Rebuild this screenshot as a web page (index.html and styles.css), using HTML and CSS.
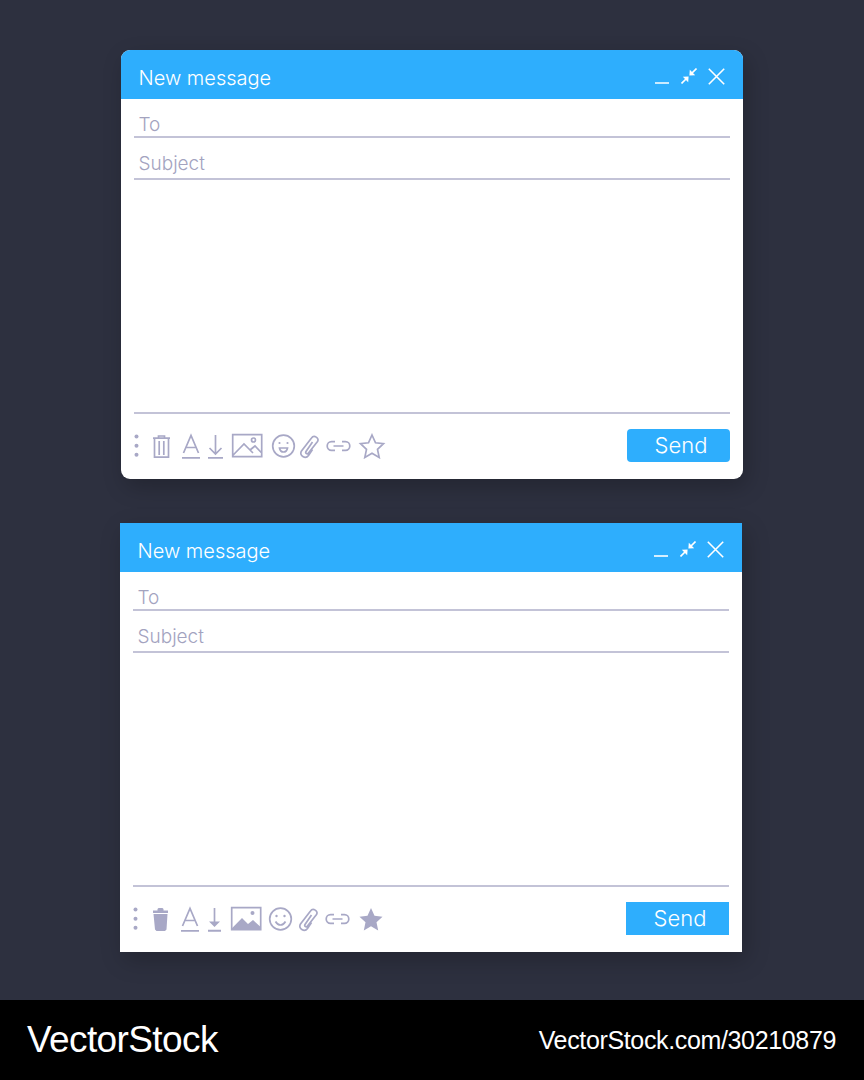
FILE: index.html
```html
<!DOCTYPE html>
<html lang="en">
<head>
  <meta charset="UTF-8">
  <title>New message</title>
  <link rel="stylesheet" href="styles.css">
</head>
<body>
  <main class="stage">
    <!-- Outline version, rounded corners -->
    <section class="window window-round">
      <header class="window-head">
        <span class="window-title">New message</span>
        <div class="window-controls">
          <svg class="ctl ctl-min" width="15" height="16" viewBox="0 0 15 16"><path d="M0 15h14"/></svg>
          <svg class="ctl ctl-shrink" width="16" height="16" viewBox="0 0 16 16"><path d="M15.500 .5 10 6M.5 15.500 6 10"/><path class="ctl-fill" d="M8.400 7.600 8.800 1.800l5.400 5.400zM7.600 8.400 7.200 14.200 1.800 8.800z"/></svg>
          <svg class="ctl ctl-close" width="17" height="17" viewBox="0 0 17 17"><path d="M.8 .8l15.400 15.400M16.200 .8 .8 16.200"/></svg>
        </div>
      </header>
      <div class="window-body">
        <div class="field field-to">To</div>
        <div class="field field-subject">Subject</div>
        <div class="message-area"></div>
        <div class="toolbar">
          <svg class="ico" width="14" height="26" viewBox="0 0 14 26"><circle class="solid" cx="2.500" cy="3.500" r="2"/><circle class="solid" cx="2.500" cy="12.700" r="2"/><circle class="solid" cx="2.500" cy="21.700" r="2"/></svg>
          <svg class="ico" width="28" height="26" viewBox="0 0 28 26"><path d="M5 5.200h17M10.500 4.500V3h6v1.500M6.500 5.200v19h14v-19M11.200 8v14M15.800 8v14"/></svg>
          <svg class="ico" width="28" height="26" viewBox="0 0 28 26"><path d="M7.500 20 15 2.500 22.500 20M10 14.500h10M6 24.800h18"/></svg>
          <svg class="ico" width="24" height="26" viewBox="0 0 24 26"><path d="M11.500 2v19M5.500 15l6 6 6-6M4 24.800h15"/></svg>
          <svg class="ico" width="39" height="26" viewBox="0 0 39 26"><path d="M4.700 1.700h29v22h-29zM4.700 22.500 16 11l9 9M22 17l5-4 6.700 7"/><circle cx="25.500" cy="7" r="2"/></svg>
          <svg class="ico" width="32" height="26" viewBox="0 0 32 26"><circle cx="16.500" cy="13" r="10.800"/><circle class="solid" cx="12.500" cy="10" r="1.100"/><circle class="solid" cx="20.500" cy="10" r="1.100"/><path d="M12.500 15h8c-.5 2.800-2 4-4 4s-3.500-1.200-4-4z"/></svg>
          <svg class="ico" width="23" height="26" viewBox="0 0 23 26"><path d="M13.500 9 7 18.500c-1 1.800 1.200 3.200 2.500 1.500L18.500 8.500c2.200-3.500-3.500-7-6-3.500L2.500 18c-2.800 4.500 4 8.500 7 4.500l4-6"/></svg>
          <svg class="ico" width="33" height="26" viewBox="0 0 33 26"><path d="M13 8.700H9.500a4.300 4.300 0 0 0 0 8.600H13M20 8.700h3.500a4.300 4.300 0 0 1 0 8.600H20M11.500 13h10"/></svg>
          <svg class="ico" width="34" height="26" viewBox="0 0 34 26"><path d="m17 2 3.500 7.800 8 .9-6 5.600 1.700 8.200-7.200-4.200-7.200 4.200 1.700-8.200-6-5.600 8-.9z"/></svg>
          <button class="send" type="button">Send</button>
        </div>
      </div>
    </section>

    <!-- Filled version, square corners -->
    <section class="window window-square">
      <header class="window-head">
        <span class="window-title">New message</span>
        <div class="window-controls">
          <svg class="ctl ctl-min" width="15" height="16" viewBox="0 0 15 16"><path d="M0 15h14"/></svg>
          <svg class="ctl ctl-shrink" width="16" height="16" viewBox="0 0 16 16"><path d="M15.500 .5 10 6M.5 15.500 6 10"/><path class="ctl-fill" d="M8.400 7.600 8.800 1.800l5.400 5.400zM7.600 8.400 7.200 14.200 1.800 8.800z"/></svg>
          <svg class="ctl ctl-close" width="17" height="17" viewBox="0 0 17 17"><path d="M.8 .8l15.400 15.400M16.200 .8 .8 16.200"/></svg>
        </div>
      </header>
      <div class="window-body">
        <div class="field field-to">To</div>
        <div class="field field-subject">Subject</div>
        <div class="message-area"></div>
        <div class="toolbar">
          <svg class="ico" width="14" height="26" viewBox="0 0 14 26"><circle class="solid" cx="2.500" cy="3.500" r="2"/><circle class="solid" cx="2.500" cy="12.700" r="2"/><circle class="solid" cx="2.500" cy="21.700" r="2"/></svg>
          <svg class="ico" width="28" height="26" viewBox="0 0 28 26"><path class="solid" d="M6 4.500h4.500V3l1-1h4l1 1v1.500H21V7H6zM6.500 8h14l-1 15.500-1.500 1.500H9.500L8 23.500z"/></svg>
          <svg class="ico" width="28" height="26" viewBox="0 0 28 26"><path d="M7.500 20 15 2.500 22.500 20M10 14.500h10M6 24.800h18"/></svg>
          <svg class="ico" width="24" height="26" viewBox="0 0 24 26"><path d="M11.500 2v16"/><path class="solid" d="M6 15.500h11L11.500 21zM5 23.700h13v2H5z"/></svg>
          <svg class="ico" width="39" height="26" viewBox="0 0 39 26"><path d="M4.700 1.700h29v22h-29z"/><path class="solid" d="M4.700 22.500 15 12l6 6 5-4 7.700 7v3h-29z"/><circle class="solid" cx="25.500" cy="7" r="2"/></svg>
          <svg class="ico" width="32" height="26" viewBox="0 0 32 26"><circle cx="14.500" cy="13" r="10.800"/><circle class="solid" cx="10.500" cy="10" r="1.200"/><circle class="solid" cx="18.500" cy="10" r="1.200"/><path d="M9.500 15.500c1.500 2.500 3 3.500 5 3.500s3.500-1 5-3.500"/></svg>
          <svg class="ico" width="23" height="26" viewBox="0 0 23 26"><path d="M13.500 9 7 18.500c-1 1.800 1.200 3.200 2.500 1.500L18.500 8.500c2.200-3.500-3.500-7-6-3.500L2.500 18c-2.800 4.500 4 8.500 7 4.500l4-6"/></svg>
          <svg class="ico" width="33" height="26" viewBox="0 0 33 26"><path d="M13 8.700H9.500a4.300 4.300 0 0 0 0 8.600H13M20 8.700h3.500a4.300 4.300 0 0 1 0 8.600H20M11.500 13h10"/></svg>
          <svg class="ico" width="34" height="26" viewBox="0 0 34 26"><path class="solid" d="m17 2 3.500 7.800 8 .9-6 5.600 1.700 8.200-7.200-4.200-7.200 4.200 1.700-8.200-6-5.600 8-.9z"/></svg>
          <button class="send" type="button">Send</button>
        </div>
      </div>
    </section>
  </main>

  <footer class="stock-bar">
    <span class="stock-logo">VectorStock</span>
    <span class="stock-id">VectorStock.com/30210879</span>
  </footer>
</body>
</html>
```

FILE: styles.css
```css
* {
  box-sizing: border-box;
}
html, body {
  margin: 0;
  padding: 0;
}
body {
  width: 864px;
  height: 1080px;
  overflow: hidden;
  background: #2d303f;
  font-family: 'Inter', 'Liberation Sans', sans-serif;
  font-weight: 300;
}
.stage {
  height: 1000px;
  padding-top: 50px;
}
.window {
  display: flex;
  flex-direction: column;
  width: 622px;
  height: 429px;
  background: #fff;
  box-shadow: 4px 8px 22px rgba(0, 0, 0, 0.22);
  overflow: hidden;
}
.window-round {
  margin-left: 121px;
  border-radius: 9px;
}
.window-square {
  margin-left: 120px;
  margin-top: 44px;
}
.window-head {
  display: flex;
  align-items: center;
  flex: none;
  height: 49px;
  padding: 0 18px 0 17.5px;
  background: #2eaefd;
  color: #fff;
}
.window-title {
  font-size: 20px;
  line-height: 24px;
  margin-top: 7px;
}
.window-controls {
  display: flex;
  align-items: flex-start;
  margin-left: auto;
  height: 17px;
  margin-top: 3px;
}
.ctl {
  display: block;
  fill: none;
  stroke: #fff;
  stroke-width: 1.6;
}
.ctl-fill {
  fill: #fff;
  stroke: none;
}
.ctl-shrink {
  margin-left: 11px;
}
.ctl-close {
  margin-left: 11px;
}
.window-body {
  display: flex;
  flex-direction: column;
  flex: 1;
  padding: 0 13px;
}
.field {
  flex: none;
  display: flex;
  align-items: flex-end;
  padding: 0 4.5px 0;
  border-bottom: 2px solid #c3c3d7;
  color: #a3a3bf;
  font-size: 19px;
  line-height: 22px;
}
.field-to {
  height: 39px;
}
.field-subject {
  height: 42px;
  padding-bottom: 3px;
}
.message-area {
  flex: 1;
  border-bottom: 2px solid #c3c3d7;
}
.toolbar {
  display: flex;
  align-items: center;
  flex: none;
  height: 65px;
  padding-bottom: 2px;
}
.ico {
  display: block;
  flex: none;
  fill: none;
  stroke: #a8a8c6;
  stroke-width: 1.7;
}
.ico .solid {
  fill: #a8a8c6;
  stroke: none;
}
.send {
  margin-left: auto;
  width: 103px;
  height: 33px;
  padding: 0 0 0 5px;
  border: none;
  background: #2eaefd;
  color: #fff;
  font-family: inherit;
  font-size: 22px;
  font-weight: 300;
  line-height: 31px;
  cursor: pointer;
}
.window-round .send {
  border-radius: 4px;
}
.stock-bar {
  display: flex;
  align-items: center;
  justify-content: space-between;
  height: 80px;
  padding: 0 28px 0 27px;
  background: #000;
  color: #fff;
  font-family: 'Liberation Sans', sans-serif;
  font-weight: 400;
}
.stock-logo {
  font-size: 37px;
  letter-spacing: -0.6px;
}
.stock-id {
  font-size: 25px;
  letter-spacing: -0.35px;
}
```
